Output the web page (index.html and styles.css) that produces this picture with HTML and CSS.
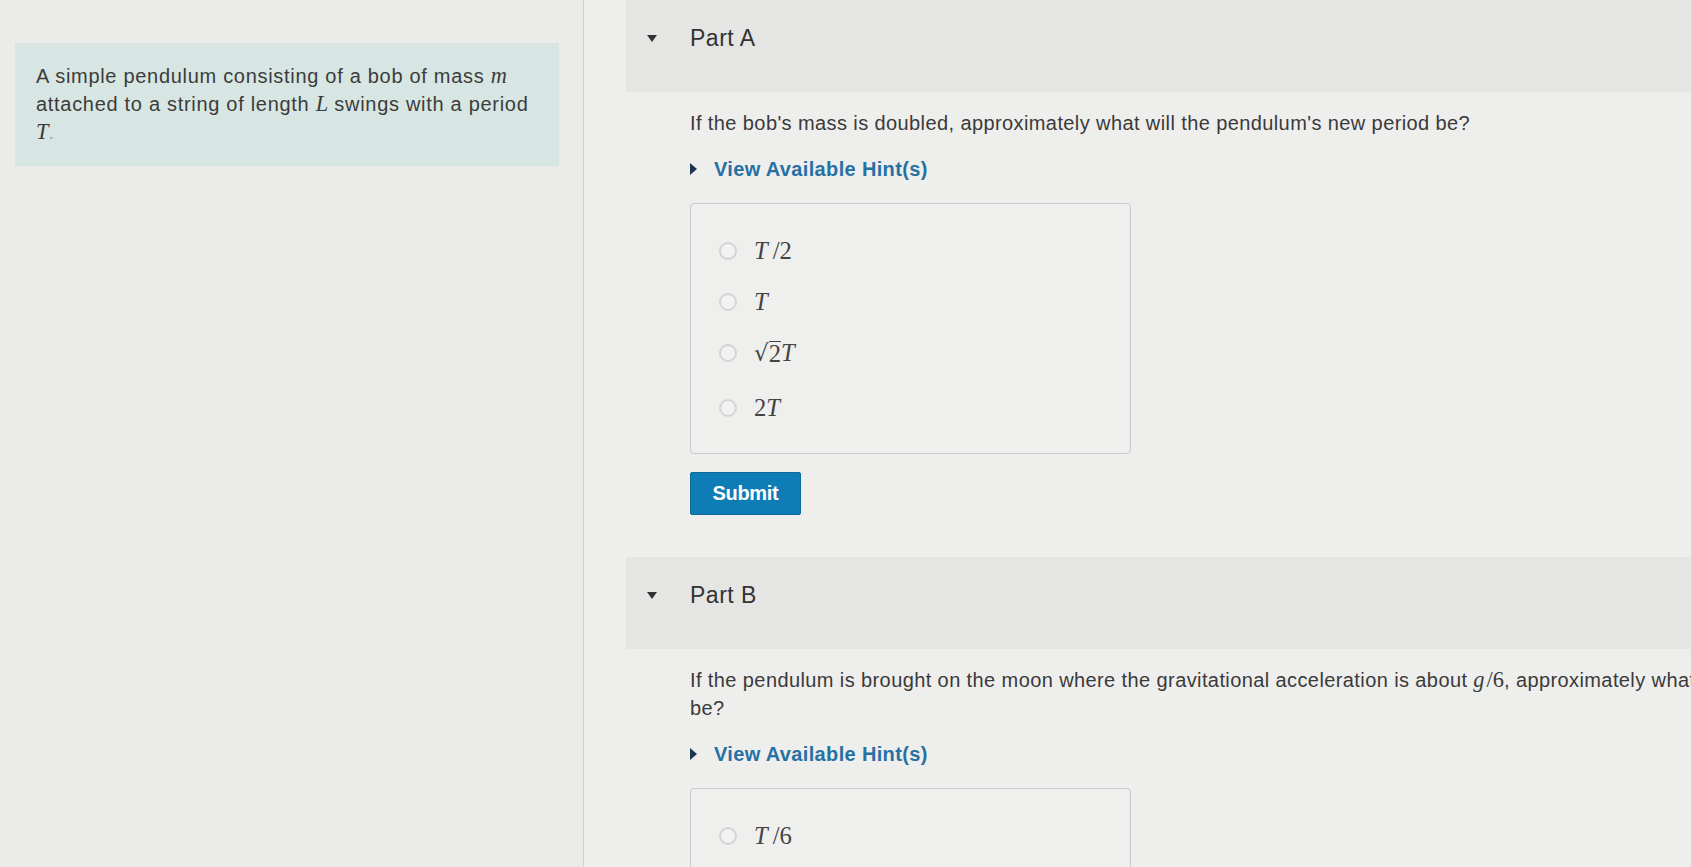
FILE: index.html
```html
<!DOCTYPE html>
<html>
<head>
<meta charset="utf-8">
<link rel="stylesheet" href="styles.css">
</head>
<body>
<div class="page">
  <aside class="intro">
    <div class="intro-box">
      A simple pendulum consisting of a bob of mass <span class="m">m</span>
      attached to a string of length <span class="m">L</span> swings with a period
      <span class="m">T</span><span class="dot">.</span>
    </div>
  </aside>
  <main class="parts">
    <section class="part">
      <header class="part-head">
        <span class="tri-down"></span>
        <span class="part-title">Part A</span>
      </header>
      <div class="part-body">
        <p class="question">If the bob's mass is doubled, approximately what will the pendulum's new period be?</p>
        <div class="hint"><span class="tri-right"></span><span>View Available Hint(s)</span></div>
        <div class="options">
          <label class="opt"><span class="radio"></span><span class="m">T</span><span class="mn slash">/2</span></label>
          <label class="opt"><span class="radio"></span><span class="m">T</span></label>
          <label class="opt opt-tall"><span class="radio"></span><span class="sqrt"><span class="rad">√</span><span class="under mn">2</span></span><span class="m">T</span></label>
          <label class="opt"><span class="radio"></span><span class="mn">2</span><span class="m">T</span></label>
        </div>
        <button class="submit">Submit</button>
      </div>
    </section>
    <section class="part">
      <header class="part-head">
        <span class="tri-down"></span>
        <span class="part-title">Part B</span>
      </header>
      <div class="part-body">
        <p class="question wide">If the pendulum is brought on the moon where the gravitational acceleration is about <span class="m">g</span><span class="mn slash-sm">/6</span>, approximately what will the pendulum's new period be?</p>
        <div class="hint"><span class="tri-right"></span><span>View Available Hint(s)</span></div>
        <div class="options">
          <label class="opt"><span class="radio"></span><span class="m">T</span><span class="mn slash">/6</span></label>
        </div>
      </div>
    </section>
  </main>
</div>
</body>
</html>
```
FILE: styles.css
```css
html, body {
  margin: 0;
  padding: 0;
  overflow: hidden;
  width: 1691px;
  height: 867px;
}
body {
  background: #ececeb;
  font-family: "Liberation Sans", Arial, sans-serif;
  color: #3a3a3a;
}
.page {
  display: flex;
  height: 867px;
}
.intro {
  width: 584px;
  flex: none;
  border-right: 1px solid #cfd0d0;
  padding: 43px 0 0 15px;
  box-sizing: border-box;
  background: #ebebea;
}
.intro-box {
  width: 544px;
  height: 123px;
  box-sizing: border-box;
  background: #d7e6e2;
  padding: 19px 20px 0 21px;
  font-size: 20px;
  letter-spacing: 0.7px;
  line-height: 28px;
  color: #3c3c3c;
}
.m {
  font-family: "Liberation Serif", "Times New Roman", serif;
  font-style: italic;
  font-size: 1.12em;
  letter-spacing: 0;
}
.mn {
  font-family: "Liberation Serif", "Times New Roman", serif;
  font-size: 1.12em;
  letter-spacing: 0;
}
.slash { margin-left: 5px; }
.slash-sm { margin-left: 2px; }
.dot { color: #aaa; }
.parts {
  flex: none;
  width: 1400px;
  padding-left: 42px;
  background: #eeeeed;
}
.part-head {
  height: 92px;
  background: #e5e5e4;
  display: flex;
  align-items: flex-start;
  padding-top: 24px;
  box-sizing: border-box;
}
.tri-down {
  width: 0;
  height: 0;
  border-left: 5px solid transparent;
  border-right: 5px solid transparent;
  border-top: 7px solid #333;
  margin: 11px 0 0 21px;
}
.part-title {
  margin-left: 33px;
  font-size: 23px;
  letter-spacing: 0.5px;
  line-height: 28px;
  color: #333;
}
.part-body {
  padding: 17px 0 42px 64px;
}
.question {
  margin: 0;
  font-size: 20px;
  letter-spacing: 0.4px;
  line-height: 28px;
  color: #3a3a3a;
}
.question.wide { width: 1325px; }
.hint {
  margin-top: 20px;
  display: flex;
  align-items: center;
  font-weight: bold;
  font-size: 20px;
  letter-spacing: 0.35px;
  color: #2671a3;
  height: 24px;
}
.tri-right {
  width: 0;
  height: 0;
  border-top: 6px solid transparent;
  border-bottom: 6px solid transparent;
  border-left: 7px solid #1d3550;
  margin-right: 17px;
}
.options {
  margin-top: 22px;
  width: 441px;
  box-sizing: border-box;
  border: 1px solid #c9c9c9;
  border-radius: 4px;
  padding: 32px 0 30px 28px;
  background: #efefee;
}
.opt {
  display: flex;
  align-items: center;
  height: 30px;
  margin-bottom: 21px;
  font-size: 22px;
  color: #444;
}
.opt-tall { margin-bottom: 25px; }
.opt:last-child { margin-bottom: 0; }
.radio {
  width: 14px;
  height: 14px;
  border: 2px solid #d4d4d4;
  border-radius: 50%;
  background: #f2f2f2;
  margin-right: 17px;
  flex: none;
}
.sqrt {
  display: inline-flex;
  align-items: flex-end;
}
.rad {
  font-family: "DejaVu Serif", serif;
  font-size: 23px;
}
.under {
  border-top: 1.5px solid #444;
  line-height: 24px;
}
.submit {
  margin-top: 18px;
  width: 111px;
  height: 43px;
  background: #0e7db6;
  border: 1px solid #0a6a9c;
  border-radius: 2px;
  color: #fff;
  font-family: "Liberation Sans", Arial, sans-serif;
  font-weight: bold;
  font-size: 20px;
  letter-spacing: -0.3px;
}
```
